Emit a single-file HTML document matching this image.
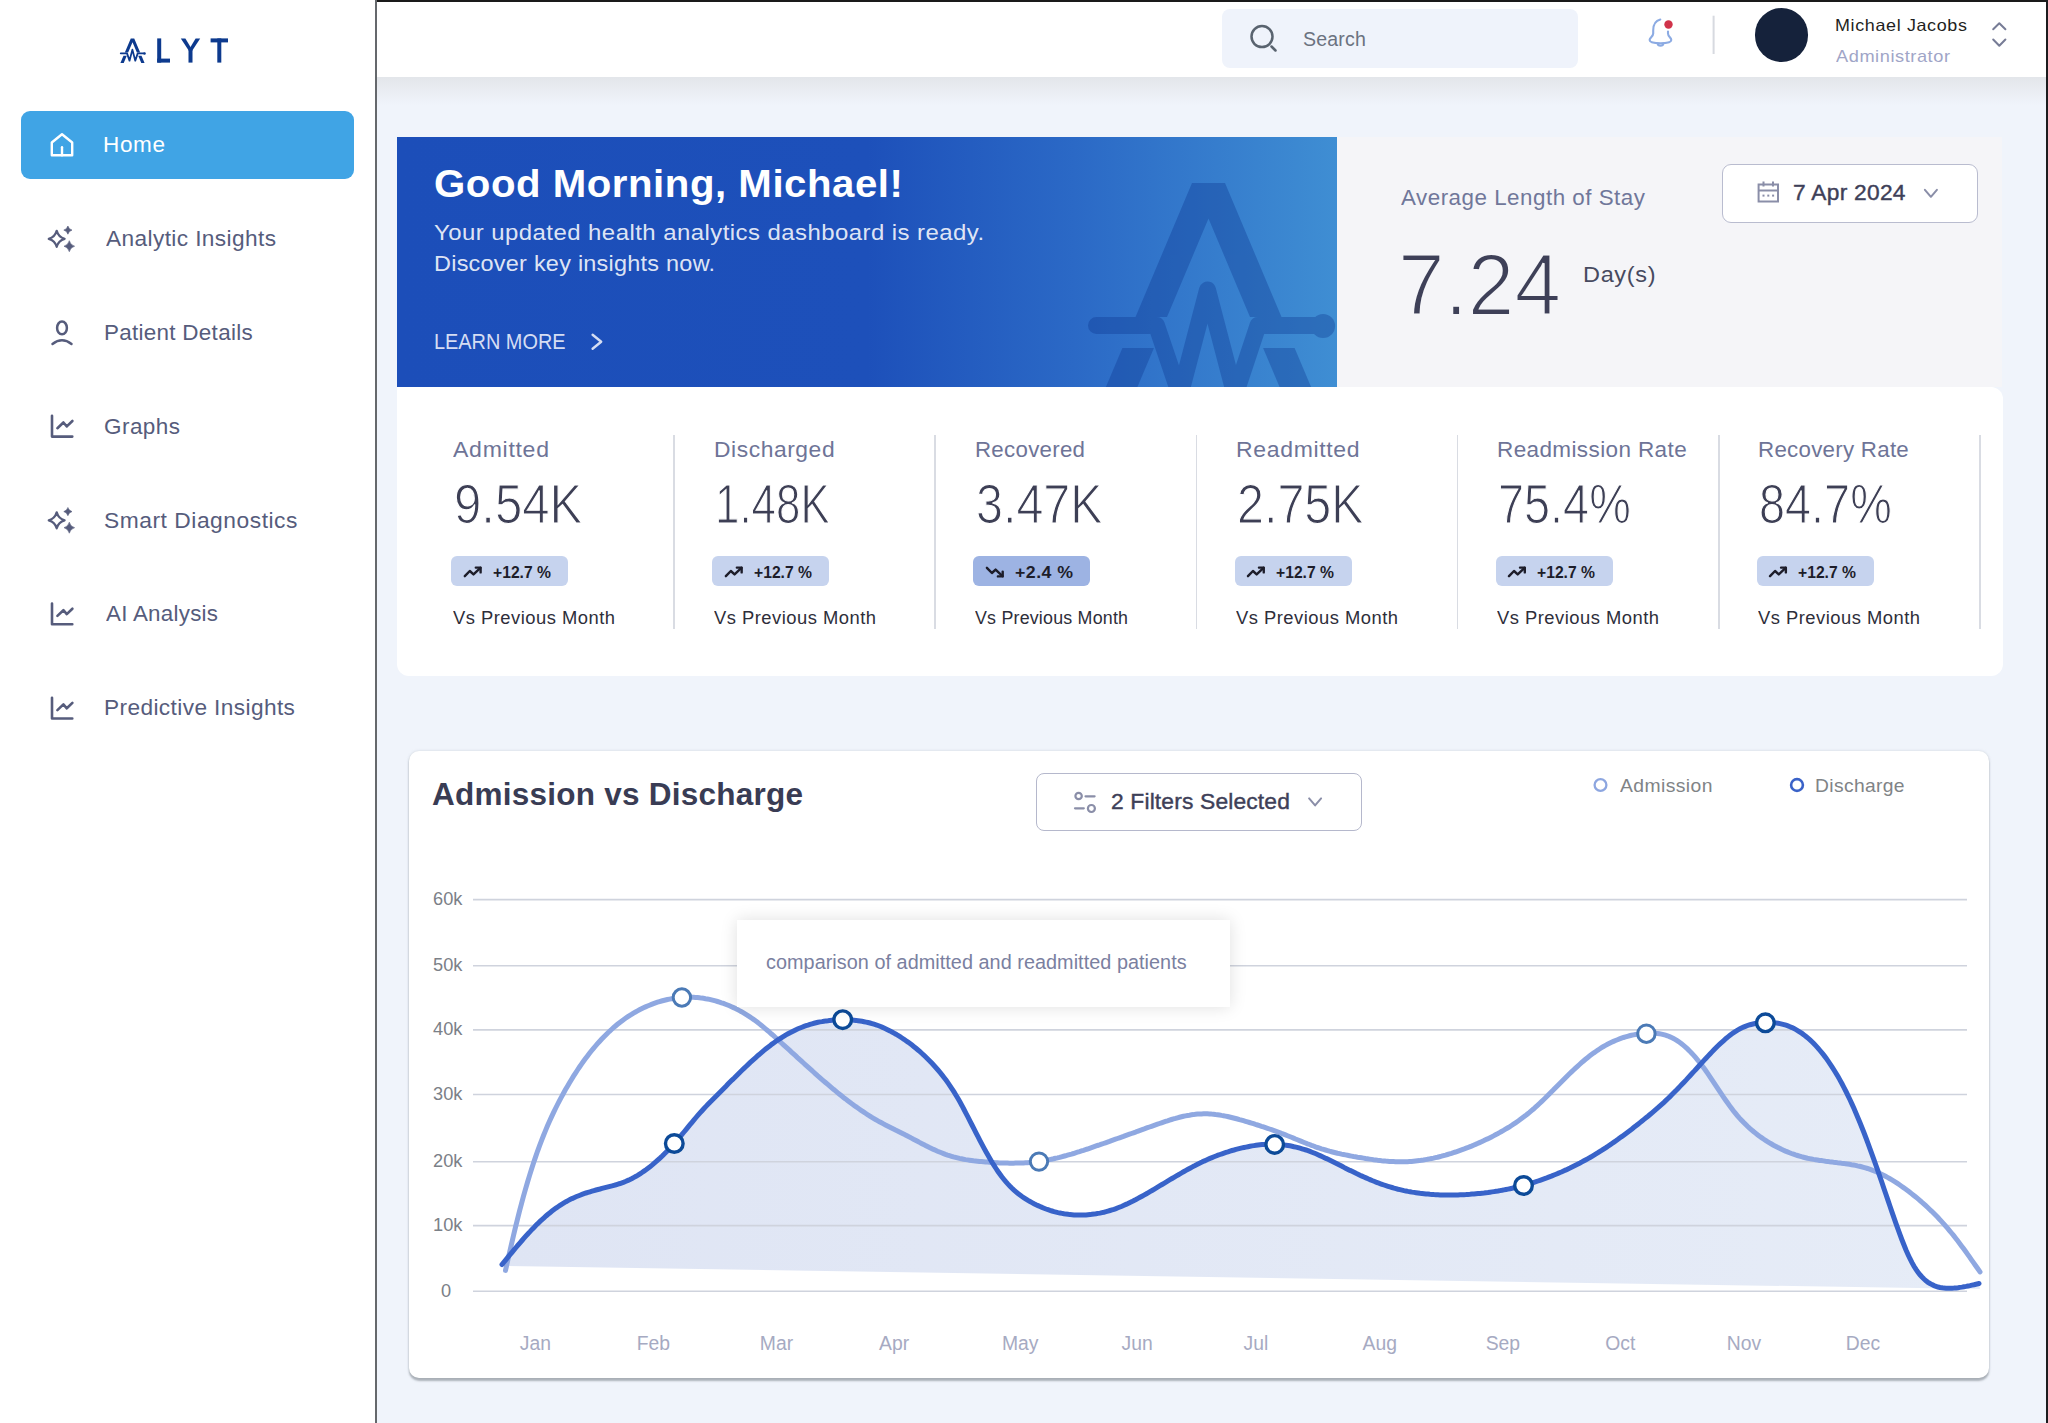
<!DOCTYPE html>
<html><head><meta charset="utf-8"><title>ALYT Dashboard</title>
<style>
html,body{margin:0;padding:0;}
body{width:2048px;height:1423px;overflow:hidden;position:relative;background:#fff;font-family:"Liberation Sans",sans-serif;}
.t{position:absolute;white-space:nowrap;}
</style></head><body>
<div style="position:absolute;left:0px;top:0px;width:376px;height:1423px;background:#fff"></div>
<div style="position:absolute;left:375px;top:0px;width:2px;height:1423px;background:#65686c"></div>
<div style="position:absolute;left:377px;top:0px;width:1669px;height:1423px;background:#f0f4fb"></div>
<div style="position:absolute;left:2046px;top:0px;width:2px;height:1423px;background:#1c1c1e"></div>
<div style="position:absolute;left:377px;top:77px;width:1669px;height:28px;background:linear-gradient(#e3e6ea,rgba(240,244,251,0))"></div>
<div style="position:absolute;left:377px;top:0px;width:1669px;height:77px;background:#fff"></div>
<div style="position:absolute;left:377px;top:0px;width:1669px;height:2px;background:#1a1a1a"></div>
<div style="position:absolute;left:21px;top:111px;width:333px;height:68px;background:#40a4e5;border-radius:9px"></div>
<div class="t" style="left:103.3px;top:133.9px;font-size:21.80px;line-height:21.80px;letter-spacing:0.620px;color:#ffffff;transform:scaleX(1.0331);transform-origin:0 0;">Home</div>
<div class="t" style="left:105.5px;top:228.1px;font-size:21.80px;line-height:21.80px;letter-spacing:0.375px;color:#565c7c;transform:scaleX(1.0396);transform-origin:0 0;">Analytic Insights</div>
<div class="t" style="left:104.2px;top:321.7px;font-size:21.80px;line-height:21.80px;letter-spacing:0.282px;color:#565c7c;transform:scaleX(1.0289);transform-origin:0 0;">Patient Details</div>
<div class="t" style="left:103.7px;top:415.5px;font-size:21.80px;line-height:21.80px;letter-spacing:0.437px;color:#565c7c;transform:scaleX(1.0315);transform-origin:0 0;">Graphs</div>
<div class="t" style="left:104.2px;top:509.6px;font-size:21.80px;line-height:21.80px;letter-spacing:0.496px;color:#565c7c;transform:scaleX(1.0469);transform-origin:0 0;">Smart Diagnostics</div>
<div class="t" style="left:105.5px;top:603.2px;font-size:21.80px;line-height:21.80px;letter-spacing:0.262px;color:#565c7c;transform:scaleX(1.0251);transform-origin:0 0;">AI Analysis</div>
<div class="t" style="left:104.2px;top:697.4px;font-size:21.80px;line-height:21.80px;letter-spacing:0.376px;color:#565c7c;transform:scaleX(1.0398);transform-origin:0 0;">Predictive Insights</div>
<div style="position:absolute;left:1222px;top:9px;width:356px;height:59px;background:#eff3fb;border-radius:8px"></div>
<div class="t" style="left:1303.0px;top:29.7px;font-size:19.33px;line-height:19.33px;letter-spacing:0.153px;color:#6b7280;transform:scaleX(1.0127);transform-origin:0 0;">Search</div>
<div style="position:absolute;left:1754.6px;top:8.4px;width:53.2px;height:53.2px;border-radius:50%;background:#15223b"></div>
<div class="t" style="left:1835.3px;top:17.6px;font-size:16.72px;line-height:16.72px;letter-spacing:0.602px;color:#1f1f22;transform:scaleX(1.0729);transform-origin:0 0;">Michael Jacobs</div>
<div class="t" style="left:1835.5px;top:47.5px;font-size:17.01px;line-height:17.01px;letter-spacing:0.539px;color:#a0a5c7;transform:scaleX(1.0690);transform-origin:0 0;">Administrator</div>
<div style="position:absolute;left:397px;top:136.5px;width:940px;height:250.5px;background:linear-gradient(90deg,#1c4eb9 0%,#1d50ba 50%,#2b69c6 72%,#3f8ed3 100%)"></div>
<div class="t" style="left:433.6px;top:163.5px;font-size:39.24px;line-height:39.24px;letter-spacing:0.514px;color:#ffffff;font-weight:700;transform:scaleX(1.0247);transform-origin:0 0;">Good Morning, Michael!</div>
<div class="t" style="left:433.6px;top:220.6px;font-size:22.97px;line-height:22.97px;letter-spacing:0.431px;color:rgba(255,255,255,0.87);transform:scaleX(1.0426);transform-origin:0 0;">Your updated health analytics dashboard is ready.</div>
<div class="t" style="left:433.6px;top:252.4px;font-size:22.97px;line-height:22.97px;letter-spacing:0.229px;color:rgba(255,255,255,0.87);transform:scaleX(1.0217);transform-origin:0 0;">Discover key insights now.</div>
<div class="t" style="left:434.0px;top:331.4px;font-size:21.80px;line-height:21.80px;letter-spacing:0.000px;color:#d5ddf3;transform:scaleX(0.9128);transform-origin:0 0;">LEARN MORE</div>
<div style="position:absolute;left:1337px;top:137px;width:665px;height:250px;background:#f5f5f8"></div>
<div class="t" style="left:1400.5px;top:187.8px;font-size:21.37px;line-height:21.37px;letter-spacing:0.479px;color:#70779a;transform:scaleX(1.0473);transform-origin:0 0;">Average Length of Stay</div>
<div class="t" style="left:1397.5px;top:240.5px;font-size:87.11px;line-height:87.11px;letter-spacing:0.000px;color:#3e4058;transform:scaleX(0.9616);transform-origin:0 0;-webkit-text-stroke:2.2px #f5f5f8;paint-order:normal;">7.24</div>
<div class="t" style="left:1582.9px;top:263.8px;font-size:22.38px;line-height:22.38px;letter-spacing:0.628px;color:#474a60;transform:scaleX(1.0501);transform-origin:0 0;">Day(s)</div>
<div style="position:absolute;left:1722px;top:163.5px;width:255.5px;height:59.0px;background:#fff;border:1.5px solid #b9bccf;border-radius:9px;box-sizing:border-box"></div>
<div class="t" style="left:1792.7px;top:181.8px;font-size:22.24px;line-height:22.24px;letter-spacing:0.268px;color:#3e4058;transform:scaleX(1.0229);transform-origin:0 0;-webkit-text-stroke:0.4px #3e4058;">7 Apr 2024</div>
<div style="position:absolute;left:397px;top:387px;width:1605.6px;height:289px;background:#fff;border-radius:0 12px 12px 12px"></div>
<div class="t" style="left:452.5px;top:439.0px;font-size:21.80px;line-height:21.80px;letter-spacing:0.673px;color:#6e7497;transform:scaleX(1.0579);transform-origin:0 0;">Admitted</div>
<div class="t" style="left:453.5px;top:476.6px;font-size:54.73px;line-height:54.73px;letter-spacing:0.000px;color:#3d3f55;transform:scaleX(0.8978);transform-origin:0 0;-webkit-text-stroke:1.2px #fff;">9.54K</div>
<div style="position:absolute;left:451.3px;top:556px;width:116.99999999999994px;height:30.299999999999955px;background:#c6d3ee;border-radius:6px"></div>
<div class="t" style="left:492.9px;top:563.5px;font-size:17.01px;line-height:17.01px;letter-spacing:0.000px;color:#1d1d2a;font-weight:700;transform:scaleX(0.9225);transform-origin:0 0;">+12.7 %</div>
<div class="t" style="left:452.5px;top:609.9px;font-size:17.44px;line-height:17.44px;letter-spacing:0.464px;color:#2e2e3a;transform:scaleX(1.0534);transform-origin:0 0;">Vs Previous Month</div>
<div style="position:absolute;left:673.2px;top:435px;width:1.599999999999909px;height:194px;background:#d9dce3"></div>
<div class="t" style="left:713.5px;top:439.0px;font-size:21.80px;line-height:21.80px;letter-spacing:0.548px;color:#6e7497;transform:scaleX(1.0468);transform-origin:0 0;">Discharged</div>
<div class="t" style="left:714.5px;top:476.6px;font-size:54.73px;line-height:54.73px;letter-spacing:0.000px;color:#3d3f55;transform:scaleX(0.8020);transform-origin:0 0;-webkit-text-stroke:1.2px #fff;">1.48K</div>
<div style="position:absolute;left:712.3px;top:556px;width:117.0px;height:30.299999999999955px;background:#c6d3ee;border-radius:6px"></div>
<div class="t" style="left:753.9px;top:563.5px;font-size:17.01px;line-height:17.01px;letter-spacing:0.000px;color:#1d1d2a;font-weight:700;transform:scaleX(0.9225);transform-origin:0 0;">+12.7 %</div>
<div class="t" style="left:713.5px;top:609.9px;font-size:17.44px;line-height:17.44px;letter-spacing:0.464px;color:#2e2e3a;transform:scaleX(1.0534);transform-origin:0 0;">Vs Previous Month</div>
<div style="position:absolute;left:934.4px;top:435px;width:1.6000000000000227px;height:194px;background:#d9dce3"></div>
<div class="t" style="left:974.6px;top:439.0px;font-size:21.80px;line-height:21.80px;letter-spacing:0.280px;color:#6e7497;transform:scaleX(1.0217);transform-origin:0 0;">Recovered</div>
<div class="t" style="left:975.6px;top:476.6px;font-size:54.73px;line-height:54.73px;letter-spacing:0.000px;color:#3d3f55;transform:scaleX(0.8852);transform-origin:0 0;-webkit-text-stroke:1.2px #fff;">3.47K</div>
<div style="position:absolute;left:973.4px;top:556px;width:117.00000000000011px;height:30.299999999999955px;background:#9db3e3;border-radius:6px"></div>
<div class="t" style="left:1015.0px;top:563.5px;font-size:17.01px;line-height:17.01px;letter-spacing:0.439px;color:#1d1d2a;font-weight:700;transform:scaleX(1.0429);transform-origin:0 0;">+2.4 %</div>
<div class="t" style="left:974.6px;top:609.9px;font-size:17.44px;line-height:17.44px;letter-spacing:0.202px;color:#2e2e3a;transform:scaleX(1.0226);transform-origin:0 0;">Vs Previous Month</div>
<div style="position:absolute;left:1195.6px;top:435px;width:1.6000000000001364px;height:194px;background:#d9dce3"></div>
<div class="t" style="left:1235.7px;top:439.0px;font-size:21.80px;line-height:21.80px;letter-spacing:0.638px;color:#6e7497;transform:scaleX(1.0543);transform-origin:0 0;">Readmitted</div>
<div class="t" style="left:1236.7px;top:476.6px;font-size:54.73px;line-height:54.73px;letter-spacing:0.000px;color:#3d3f55;transform:scaleX(0.8852);transform-origin:0 0;-webkit-text-stroke:1.2px #fff;">2.75K</div>
<div style="position:absolute;left:1234.5px;top:556px;width:117.0px;height:30.299999999999955px;background:#c6d3ee;border-radius:6px"></div>
<div class="t" style="left:1276.1px;top:563.5px;font-size:17.01px;line-height:17.01px;letter-spacing:0.000px;color:#1d1d2a;font-weight:700;transform:scaleX(0.9225);transform-origin:0 0;">+12.7 %</div>
<div class="t" style="left:1235.7px;top:609.9px;font-size:17.44px;line-height:17.44px;letter-spacing:0.464px;color:#2e2e3a;transform:scaleX(1.0534);transform-origin:0 0;">Vs Previous Month</div>
<div style="position:absolute;left:1456.8px;top:435px;width:1.6000000000001364px;height:194px;background:#d9dce3"></div>
<div class="t" style="left:1496.7px;top:439.0px;font-size:21.80px;line-height:21.80px;letter-spacing:0.374px;color:#6e7497;transform:scaleX(1.0325);transform-origin:0 0;">Readmission Rate</div>
<div class="t" style="left:1497.7px;top:476.6px;font-size:54.73px;line-height:54.73px;letter-spacing:0.000px;color:#3d3f55;transform:scaleX(0.8558);transform-origin:0 0;-webkit-text-stroke:1.2px #fff;">75.4%</div>
<div style="position:absolute;left:1495.5px;top:556px;width:117.0px;height:30.299999999999955px;background:#c6d3ee;border-radius:6px"></div>
<div class="t" style="left:1537.1px;top:563.5px;font-size:17.01px;line-height:17.01px;letter-spacing:0.000px;color:#1d1d2a;font-weight:700;transform:scaleX(0.9225);transform-origin:0 0;">+12.7 %</div>
<div class="t" style="left:1496.7px;top:609.9px;font-size:17.44px;line-height:17.44px;letter-spacing:0.464px;color:#2e2e3a;transform:scaleX(1.0534);transform-origin:0 0;">Vs Previous Month</div>
<div style="position:absolute;left:1718.0px;top:435px;width:1.599999999999909px;height:194px;background:#d9dce3"></div>
<div class="t" style="left:1757.8px;top:439.0px;font-size:21.80px;line-height:21.80px;letter-spacing:0.269px;color:#6e7497;transform:scaleX(1.0229);transform-origin:0 0;">Recovery Rate</div>
<div class="t" style="left:1758.8px;top:476.6px;font-size:54.73px;line-height:54.73px;letter-spacing:0.000px;color:#3d3f55;transform:scaleX(0.8558);transform-origin:0 0;-webkit-text-stroke:1.2px #fff;">84.7%</div>
<div style="position:absolute;left:1756.5px;top:556px;width:117.0px;height:30.299999999999955px;background:#c6d3ee;border-radius:6px"></div>
<div class="t" style="left:1798.2px;top:563.5px;font-size:17.01px;line-height:17.01px;letter-spacing:0.000px;color:#1d1d2a;font-weight:700;transform:scaleX(0.9225);transform-origin:0 0;">+12.7 %</div>
<div class="t" style="left:1757.8px;top:609.9px;font-size:17.44px;line-height:17.44px;letter-spacing:0.464px;color:#2e2e3a;transform:scaleX(1.0534);transform-origin:0 0;">Vs Previous Month</div>
<div style="position:absolute;left:1979.2px;top:435px;width:1.599999999999909px;height:194px;background:#d9dce3"></div>
<div style="position:absolute;left:409px;top:751px;width:1580px;height:627px;background:#fff;border-radius:10px;box-shadow:0 2.5px 2px rgba(120,128,135,0.55),0 0 3px rgba(150,160,170,0.35)"></div>
<svg style="position:absolute;left:0;top:0" width="2048" height="1423" viewBox="0 0 2048 1423">
<defs><linearGradient id="fg" x1="0" x2="1" y1="0" y2="0"><stop offset="0" stop-color="#dfe5f4"/><stop offset="1" stop-color="#e6ecf7"/></linearGradient></defs>
<path d="M502.0,1264.5 L504.0,1262.0 L506.0,1259.6 L508.0,1257.1 L510.0,1254.7 L512.0,1252.3 L514.0,1249.9 L516.0,1247.5 L518.0,1245.1 L520.0,1242.8 L522.0,1240.5 L524.0,1238.2 L526.0,1235.9 L528.0,1233.7 L530.0,1231.6 L532.0,1229.4 L534.0,1227.4 L536.0,1225.3 L538.0,1223.4 L540.0,1221.4 L542.0,1219.6 L544.0,1217.8 L546.0,1216.0 L548.0,1214.3 L550.0,1212.7 L552.0,1211.1 L554.0,1209.6 L556.0,1208.1 L558.0,1206.7 L560.0,1205.4 L562.0,1204.1 L564.0,1202.9 L566.0,1201.7 L568.0,1200.6 L570.0,1199.6 L572.0,1198.6 L574.0,1197.7 L576.0,1196.8 L578.0,1196.0 L580.0,1195.2 L582.0,1194.4 L584.0,1193.7 L586.0,1193.0 L588.0,1192.4 L590.0,1191.8 L592.0,1191.2 L594.0,1190.6 L596.0,1190.0 L598.0,1189.5 L600.0,1189.0 L602.0,1188.4 L604.0,1187.9 L606.0,1187.4 L608.0,1186.9 L610.0,1186.4 L612.0,1185.9 L614.0,1185.3 L616.0,1184.8 L618.0,1184.1 L620.0,1183.5 L622.0,1182.8 L624.0,1182.1 L626.0,1181.3 L628.0,1180.4 L630.0,1179.5 L632.0,1178.5 L634.0,1177.4 L636.0,1176.3 L638.0,1175.1 L640.0,1173.8 L642.0,1172.5 L644.0,1171.1 L646.0,1169.7 L648.0,1168.2 L650.0,1166.7 L652.0,1165.1 L654.0,1163.4 L656.0,1161.7 L658.0,1159.9 L660.0,1158.1 L662.0,1156.2 L664.0,1154.2 L666.0,1152.3 L668.0,1150.2 L670.0,1148.1 L672.0,1146.0 L674.0,1143.7 L676.0,1141.5 L678.0,1139.2 L680.0,1136.8 L682.0,1134.4 L684.0,1132.0 L686.0,1129.6 L688.0,1127.1 L690.0,1124.7 L692.0,1122.3 L694.0,1119.9 L696.0,1117.5 L698.0,1115.2 L700.0,1112.9 L702.0,1110.7 L704.0,1108.5 L706.0,1106.4 L708.0,1104.3 L710.0,1102.2 L712.0,1100.2 L714.0,1098.2 L716.0,1096.2 L718.0,1094.2 L720.0,1092.2 L722.0,1090.2 L724.0,1088.2 L726.0,1086.2 L728.0,1084.1 L730.0,1082.1 L732.0,1080.1 L734.0,1078.2 L736.0,1076.2 L738.0,1074.2 L740.0,1072.2 L742.0,1070.3 L744.0,1068.4 L746.0,1066.5 L748.0,1064.6 L750.0,1062.7 L752.0,1060.9 L754.0,1059.1 L756.0,1057.3 L758.0,1055.5 L760.0,1053.8 L762.0,1052.1 L764.0,1050.4 L766.0,1048.8 L768.0,1047.2 L770.0,1045.7 L772.0,1044.1 L774.0,1042.7 L776.0,1041.3 L778.0,1039.9 L780.0,1038.6 L782.0,1037.3 L784.0,1036.1 L786.0,1034.9 L788.0,1033.8 L790.0,1032.7 L792.0,1031.7 L794.0,1030.7 L796.0,1029.7 L798.0,1028.8 L800.0,1028.0 L802.0,1027.2 L804.0,1026.4 L806.0,1025.7 L808.0,1025.1 L810.0,1024.4 L812.0,1023.8 L814.0,1023.3 L816.0,1022.8 L818.0,1022.3 L820.0,1021.9 L822.0,1021.6 L824.0,1021.2 L826.0,1020.9 L828.0,1020.7 L830.0,1020.4 L832.0,1020.2 L834.0,1020.1 L836.0,1020.0 L838.0,1019.9 L840.0,1019.8 L842.0,1019.8 L844.0,1019.8 L846.0,1019.8 L848.0,1019.9 L850.0,1020.0 L852.0,1020.1 L854.0,1020.2 L856.0,1020.4 L858.0,1020.7 L860.0,1021.0 L862.0,1021.3 L864.0,1021.7 L866.0,1022.1 L868.0,1022.5 L870.0,1023.0 L872.0,1023.6 L874.0,1024.2 L876.0,1024.8 L878.0,1025.5 L880.0,1026.3 L882.0,1027.1 L884.0,1028.0 L886.0,1028.9 L888.0,1029.9 L890.0,1030.9 L892.0,1032.0 L894.0,1033.1 L896.0,1034.2 L898.0,1035.5 L900.0,1036.7 L902.0,1038.0 L904.0,1039.3 L906.0,1040.7 L908.0,1042.1 L910.0,1043.6 L912.0,1045.1 L914.0,1046.7 L916.0,1048.3 L918.0,1050.0 L920.0,1051.7 L922.0,1053.5 L924.0,1055.3 L926.0,1057.2 L928.0,1059.2 L930.0,1061.2 L932.0,1063.3 L934.0,1065.5 L936.0,1067.7 L938.0,1070.0 L940.0,1072.4 L942.0,1074.9 L944.0,1077.5 L946.0,1080.1 L948.0,1082.9 L950.0,1085.8 L952.0,1088.8 L954.0,1091.9 L956.0,1095.2 L958.0,1098.6 L960.0,1102.1 L962.0,1105.7 L964.0,1109.5 L966.0,1113.3 L968.0,1117.1 L970.0,1121.1 L972.0,1125.0 L974.0,1128.9 L976.0,1132.9 L978.0,1136.7 L980.0,1140.6 L982.0,1144.4 L984.0,1148.1 L986.0,1151.8 L988.0,1155.3 L990.0,1158.8 L992.0,1162.2 L994.0,1165.4 L996.0,1168.5 L998.0,1171.5 L1000.0,1174.3 L1002.0,1177.0 L1004.0,1179.5 L1006.0,1181.9 L1008.0,1184.1 L1010.0,1186.2 L1012.0,1188.2 L1014.0,1190.1 L1016.0,1191.8 L1018.0,1193.5 L1020.0,1195.0 L1022.0,1196.5 L1024.0,1197.8 L1026.0,1199.1 L1028.0,1200.4 L1030.0,1201.5 L1032.0,1202.6 L1034.0,1203.7 L1036.0,1204.7 L1038.0,1205.6 L1040.0,1206.5 L1042.0,1207.4 L1044.0,1208.2 L1046.0,1209.0 L1048.0,1209.7 L1050.0,1210.4 L1052.0,1211.0 L1054.0,1211.6 L1056.0,1212.1 L1058.0,1212.6 L1060.0,1213.0 L1062.0,1213.4 L1064.0,1213.8 L1066.0,1214.1 L1068.0,1214.3 L1070.0,1214.6 L1072.0,1214.7 L1074.0,1214.9 L1076.0,1215.0 L1078.0,1215.0 L1080.0,1215.1 L1082.0,1215.0 L1084.0,1215.0 L1086.0,1214.9 L1088.0,1214.7 L1090.0,1214.6 L1092.0,1214.3 L1094.0,1214.1 L1096.0,1213.8 L1098.0,1213.4 L1100.0,1213.1 L1102.0,1212.6 L1104.0,1212.2 L1106.0,1211.7 L1108.0,1211.1 L1110.0,1210.5 L1112.0,1209.9 L1114.0,1209.3 L1116.0,1208.6 L1118.0,1207.8 L1120.0,1207.0 L1122.0,1206.2 L1124.0,1205.3 L1126.0,1204.4 L1128.0,1203.5 L1130.0,1202.5 L1132.0,1201.6 L1134.0,1200.5 L1136.0,1199.5 L1138.0,1198.4 L1140.0,1197.3 L1142.0,1196.2 L1144.0,1195.1 L1146.0,1194.0 L1148.0,1192.8 L1150.0,1191.6 L1152.0,1190.5 L1154.0,1189.3 L1156.0,1188.1 L1158.0,1186.9 L1160.0,1185.7 L1162.0,1184.5 L1164.0,1183.3 L1166.0,1182.1 L1168.0,1180.9 L1170.0,1179.7 L1172.0,1178.5 L1174.0,1177.3 L1176.0,1176.1 L1178.0,1175.0 L1180.0,1173.8 L1182.0,1172.7 L1184.0,1171.5 L1186.0,1170.4 L1188.0,1169.3 L1190.0,1168.2 L1192.0,1167.1 L1194.0,1166.1 L1196.0,1165.0 L1198.0,1164.0 L1200.0,1163.0 L1202.0,1162.1 L1204.0,1161.1 L1206.0,1160.2 L1208.0,1159.3 L1210.0,1158.4 L1212.0,1157.6 L1214.0,1156.8 L1216.0,1156.0 L1218.0,1155.2 L1220.0,1154.5 L1222.0,1153.8 L1224.0,1153.1 L1226.0,1152.4 L1228.0,1151.8 L1230.0,1151.1 L1232.0,1150.5 L1234.0,1150.0 L1236.0,1149.4 L1238.0,1148.9 L1240.0,1148.4 L1242.0,1147.9 L1244.0,1147.5 L1246.0,1147.1 L1248.0,1146.7 L1250.0,1146.3 L1252.0,1145.9 L1254.0,1145.6 L1256.0,1145.3 L1258.0,1145.0 L1260.0,1144.8 L1262.0,1144.6 L1264.0,1144.4 L1266.0,1144.3 L1268.0,1144.2 L1270.0,1144.2 L1272.0,1144.1 L1274.0,1144.2 L1276.0,1144.2 L1278.0,1144.3 L1280.0,1144.5 L1282.0,1144.7 L1284.0,1144.9 L1286.0,1145.2 L1288.0,1145.5 L1290.0,1145.8 L1292.0,1146.2 L1294.0,1146.7 L1296.0,1147.1 L1298.0,1147.6 L1300.0,1148.2 L1302.0,1148.8 L1304.0,1149.4 L1306.0,1150.0 L1308.0,1150.7 L1310.0,1151.4 L1312.0,1152.2 L1314.0,1153.0 L1316.0,1153.8 L1318.0,1154.7 L1320.0,1155.6 L1322.0,1156.5 L1324.0,1157.4 L1326.0,1158.4 L1328.0,1159.3 L1330.0,1160.3 L1332.0,1161.3 L1334.0,1162.3 L1336.0,1163.3 L1338.0,1164.3 L1340.0,1165.3 L1342.0,1166.3 L1344.0,1167.4 L1346.0,1168.4 L1348.0,1169.4 L1350.0,1170.4 L1352.0,1171.3 L1354.0,1172.3 L1356.0,1173.3 L1358.0,1174.2 L1360.0,1175.2 L1362.0,1176.1 L1364.0,1177.0 L1366.0,1177.9 L1368.0,1178.8 L1370.0,1179.6 L1372.0,1180.5 L1374.0,1181.3 L1376.0,1182.1 L1378.0,1182.8 L1380.0,1183.6 L1382.0,1184.3 L1384.0,1185.0 L1386.0,1185.7 L1388.0,1186.3 L1390.0,1186.9 L1392.0,1187.5 L1394.0,1188.1 L1396.0,1188.6 L1398.0,1189.2 L1400.0,1189.6 L1402.0,1190.1 L1404.0,1190.6 L1406.0,1191.0 L1408.0,1191.4 L1410.0,1191.7 L1412.0,1192.1 L1414.0,1192.4 L1416.0,1192.7 L1418.0,1193.0 L1420.0,1193.3 L1422.0,1193.5 L1424.0,1193.7 L1426.0,1193.9 L1428.0,1194.1 L1430.0,1194.3 L1432.0,1194.4 L1434.0,1194.6 L1436.0,1194.7 L1438.0,1194.8 L1440.0,1194.9 L1442.0,1194.9 L1444.0,1195.0 L1446.0,1195.0 L1448.0,1195.0 L1450.0,1195.0 L1452.0,1195.0 L1454.0,1195.0 L1456.0,1195.0 L1458.0,1194.9 L1460.0,1194.8 L1462.0,1194.8 L1464.0,1194.7 L1466.0,1194.6 L1468.0,1194.4 L1470.0,1194.3 L1472.0,1194.1 L1474.0,1194.0 L1476.0,1193.8 L1478.0,1193.6 L1480.0,1193.4 L1482.0,1193.2 L1484.0,1193.0 L1486.0,1192.7 L1488.0,1192.5 L1490.0,1192.2 L1492.0,1191.9 L1494.0,1191.6 L1496.0,1191.3 L1498.0,1191.0 L1500.0,1190.6 L1502.0,1190.3 L1504.0,1189.9 L1506.0,1189.5 L1508.0,1189.1 L1510.0,1188.7 L1512.0,1188.3 L1514.0,1187.8 L1516.0,1187.4 L1518.0,1186.9 L1520.0,1186.4 L1522.0,1185.8 L1524.0,1185.3 L1526.0,1184.8 L1528.0,1184.2 L1530.0,1183.6 L1532.0,1183.0 L1534.0,1182.3 L1536.0,1181.7 L1538.0,1181.0 L1540.0,1180.3 L1542.0,1179.6 L1544.0,1178.9 L1546.0,1178.2 L1548.0,1177.4 L1550.0,1176.6 L1552.0,1175.9 L1554.0,1175.0 L1556.0,1174.2 L1558.0,1173.4 L1560.0,1172.5 L1562.0,1171.7 L1564.0,1170.8 L1566.0,1169.9 L1568.0,1168.9 L1570.0,1168.0 L1572.0,1167.0 L1574.0,1166.0 L1576.0,1165.0 L1578.0,1164.0 L1580.0,1163.0 L1582.0,1161.9 L1584.0,1160.8 L1586.0,1159.7 L1588.0,1158.6 L1590.0,1157.5 L1592.0,1156.3 L1594.0,1155.1 L1596.0,1153.9 L1598.0,1152.7 L1600.0,1151.4 L1602.0,1150.2 L1604.0,1148.9 L1606.0,1147.6 L1608.0,1146.2 L1610.0,1144.9 L1612.0,1143.5 L1614.0,1142.1 L1616.0,1140.7 L1618.0,1139.3 L1620.0,1137.8 L1622.0,1136.4 L1624.0,1134.9 L1626.0,1133.4 L1628.0,1131.9 L1630.0,1130.4 L1632.0,1128.9 L1634.0,1127.3 L1636.0,1125.8 L1638.0,1124.2 L1640.0,1122.6 L1642.0,1121.0 L1644.0,1119.4 L1646.0,1117.8 L1648.0,1116.2 L1650.0,1114.5 L1652.0,1112.8 L1654.0,1111.1 L1656.0,1109.4 L1658.0,1107.7 L1660.0,1105.9 L1662.0,1104.1 L1664.0,1102.3 L1666.0,1100.4 L1668.0,1098.5 L1670.0,1096.6 L1672.0,1094.6 L1674.0,1092.6 L1676.0,1090.6 L1678.0,1088.5 L1680.0,1086.4 L1682.0,1084.3 L1684.0,1082.2 L1686.0,1080.1 L1688.0,1077.9 L1690.0,1075.7 L1692.0,1073.5 L1694.0,1071.4 L1696.0,1069.2 L1698.0,1067.0 L1700.0,1064.8 L1702.0,1062.6 L1704.0,1060.4 L1706.0,1058.3 L1708.0,1056.1 L1710.0,1054.0 L1712.0,1051.9 L1714.0,1049.8 L1716.0,1047.8 L1718.0,1045.8 L1720.0,1043.9 L1722.0,1042.1 L1724.0,1040.3 L1726.0,1038.5 L1728.0,1036.9 L1730.0,1035.3 L1732.0,1033.8 L1734.0,1032.4 L1736.0,1031.1 L1738.0,1029.9 L1740.0,1028.8 L1742.0,1027.8 L1744.0,1026.9 L1746.0,1026.1 L1748.0,1025.3 L1750.0,1024.7 L1752.0,1024.2 L1754.0,1023.7 L1756.0,1023.3 L1758.0,1023.0 L1760.0,1022.7 L1762.0,1022.5 L1764.0,1022.4 L1766.0,1022.3 L1768.0,1022.3 L1770.0,1022.4 L1772.0,1022.5 L1774.0,1022.7 L1776.0,1022.9 L1778.0,1023.2 L1780.0,1023.6 L1782.0,1024.1 L1784.0,1024.6 L1786.0,1025.2 L1788.0,1025.9 L1790.0,1026.7 L1792.0,1027.6 L1794.0,1028.6 L1796.0,1029.6 L1798.0,1030.8 L1800.0,1032.1 L1802.0,1033.4 L1804.0,1034.9 L1806.0,1036.5 L1808.0,1038.2 L1810.0,1039.9 L1812.0,1041.8 L1814.0,1043.8 L1816.0,1045.9 L1818.0,1048.1 L1820.0,1050.5 L1822.0,1052.9 L1824.0,1055.4 L1826.0,1058.1 L1828.0,1060.9 L1830.0,1063.8 L1832.0,1066.8 L1834.0,1070.0 L1836.0,1073.2 L1838.0,1076.6 L1840.0,1080.1 L1842.0,1083.8 L1844.0,1087.6 L1846.0,1091.5 L1848.0,1095.6 L1850.0,1099.8 L1852.0,1104.1 L1854.0,1108.6 L1856.0,1113.2 L1858.0,1117.9 L1860.0,1122.8 L1862.0,1127.8 L1864.0,1132.8 L1866.0,1138.0 L1868.0,1143.3 L1870.0,1148.8 L1872.0,1154.3 L1874.0,1159.8 L1876.0,1165.5 L1878.0,1171.2 L1880.0,1177.0 L1882.0,1182.8 L1884.0,1188.7 L1886.0,1194.5 L1888.0,1200.4 L1890.0,1206.2 L1892.0,1212.1 L1894.0,1217.9 L1896.0,1223.6 L1898.0,1229.2 L1900.0,1234.7 L1902.0,1240.0 L1904.0,1245.0 L1906.0,1249.9 L1908.0,1254.4 L1910.0,1258.7 L1912.0,1262.6 L1914.0,1266.2 L1916.0,1269.4 L1918.0,1272.2 L1920.0,1274.8 L1922.0,1277.0 L1924.0,1279.0 L1926.0,1280.8 L1928.0,1282.3 L1930.0,1283.5 L1932.0,1284.6 L1934.0,1285.6 L1936.0,1286.3 L1938.0,1287.0 L1940.0,1287.5 L1942.0,1287.8 L1944.0,1288.1 L1946.0,1288.2 L1948.0,1288.3 L1950.0,1288.3 L1952.0,1288.2 L1954.0,1288.1 L1956.0,1287.9 L1958.0,1287.7 L1960.0,1287.4 L1962.0,1287.1 L1964.0,1286.7 L1966.0,1286.4 L1968.0,1286.0 L1970.0,1285.6 L1972.0,1285.1 L1974.0,1284.7 L1976.0,1284.2 L1978.0,1283.8 L1979.0,1283.5 L1980,1289 L505,1266 Z" fill="url(#fg)"/>
<line x1="473" y1="899.6" x2="1967" y2="899.6" stroke="#cfd3dd" stroke-width="1.6"/>
<line x1="473" y1="965.7" x2="1967" y2="965.7" stroke="#cfd3dd" stroke-width="1.6"/>
<line x1="473" y1="1029.9" x2="1967" y2="1029.9" stroke="#cfd3dd" stroke-width="1.6"/>
<line x1="473" y1="1094.5" x2="1967" y2="1094.5" stroke="#cfd3dd" stroke-width="1.6"/>
<line x1="473" y1="1161.8" x2="1967" y2="1161.8" stroke="#cfd3dd" stroke-width="1.6"/>
<line x1="473" y1="1225.6" x2="1967" y2="1225.6" stroke="#cfd3dd" stroke-width="1.6"/>
<line x1="473" y1="1291.2" x2="1967" y2="1291.2" stroke="#cfd3dd" stroke-width="1.6"/>
<path d="M505.5,1270.4 L507.5,1261.5 L509.5,1252.8 L511.5,1244.1 L513.5,1235.5 L515.5,1227.2 L517.5,1219.1 L519.5,1211.2 L521.5,1203.6 L523.5,1196.2 L525.5,1189.1 L527.5,1182.2 L529.5,1175.6 L531.5,1169.2 L533.5,1163.0 L535.5,1157.1 L537.5,1151.3 L539.5,1145.9 L541.5,1140.6 L543.5,1135.5 L545.5,1130.6 L547.5,1125.8 L549.5,1121.3 L551.5,1116.9 L553.5,1112.6 L555.5,1108.5 L557.5,1104.5 L559.5,1100.6 L561.5,1096.9 L563.5,1093.2 L565.5,1089.6 L567.5,1086.2 L569.5,1082.8 L571.5,1079.5 L573.5,1076.2 L575.5,1073.1 L577.5,1070.0 L579.5,1067.0 L581.5,1064.1 L583.5,1061.3 L585.5,1058.6 L587.5,1055.9 L589.5,1053.3 L591.5,1050.8 L593.5,1048.4 L595.5,1046.0 L597.5,1043.7 L599.5,1041.5 L601.5,1039.3 L603.5,1037.2 L605.5,1035.2 L607.5,1033.2 L609.5,1031.3 L611.5,1029.5 L613.5,1027.7 L615.5,1026.0 L617.5,1024.3 L619.5,1022.7 L621.5,1021.2 L623.5,1019.7 L625.5,1018.3 L627.5,1016.9 L629.5,1015.6 L631.5,1014.4 L633.5,1013.1 L635.5,1012.0 L637.5,1010.9 L639.5,1009.8 L641.5,1008.8 L643.5,1007.8 L645.5,1006.9 L647.5,1006.0 L649.5,1005.2 L651.5,1004.4 L653.5,1003.6 L655.5,1002.9 L657.5,1002.2 L659.5,1001.6 L661.5,1001.0 L663.5,1000.5 L665.5,1000.0 L667.5,999.5 L669.5,999.1 L671.5,998.7 L673.5,998.4 L675.5,998.1 L677.5,997.9 L679.5,997.7 L681.5,997.5 L683.5,997.4 L685.5,997.3 L687.5,997.2 L689.5,997.2 L691.5,997.3 L693.5,997.3 L695.5,997.5 L697.5,997.6 L699.5,997.8 L701.5,998.1 L703.5,998.3 L705.5,998.7 L707.5,999.0 L709.5,999.4 L711.5,999.9 L713.5,1000.4 L715.5,1000.9 L717.5,1001.5 L719.5,1002.1 L721.5,1002.8 L723.5,1003.4 L725.5,1004.2 L727.5,1005.0 L729.5,1005.8 L731.5,1006.7 L733.5,1007.6 L735.5,1008.5 L737.5,1009.6 L739.5,1010.6 L741.5,1011.7 L743.5,1012.9 L745.5,1014.1 L747.5,1015.3 L749.5,1016.6 L751.5,1018.0 L753.5,1019.4 L755.5,1020.8 L757.5,1022.3 L759.5,1023.9 L761.5,1025.5 L763.5,1027.1 L765.5,1028.8 L767.5,1030.5 L769.5,1032.2 L771.5,1034.0 L773.5,1035.7 L775.5,1037.5 L777.5,1039.3 L779.5,1041.1 L781.5,1043.0 L783.5,1044.8 L785.5,1046.6 L787.5,1048.4 L789.5,1050.2 L791.5,1052.1 L793.5,1053.9 L795.5,1055.7 L797.5,1057.6 L799.5,1059.4 L801.5,1061.2 L803.5,1063.0 L805.5,1064.8 L807.5,1066.6 L809.5,1068.4 L811.5,1070.2 L813.5,1072.0 L815.5,1073.8 L817.5,1075.6 L819.5,1077.3 L821.5,1079.1 L823.5,1080.8 L825.5,1082.5 L827.5,1084.2 L829.5,1085.9 L831.5,1087.6 L833.5,1089.3 L835.5,1090.9 L837.5,1092.6 L839.5,1094.2 L841.5,1095.8 L843.5,1097.4 L845.5,1098.9 L847.5,1100.5 L849.5,1102.0 L851.5,1103.5 L853.5,1104.9 L855.5,1106.4 L857.5,1107.8 L859.5,1109.2 L861.5,1110.6 L863.5,1111.9 L865.5,1113.3 L867.5,1114.6 L869.5,1115.8 L871.5,1117.1 L873.5,1118.3 L875.5,1119.5 L877.5,1120.6 L879.5,1121.8 L881.5,1122.8 L883.5,1123.9 L885.5,1125.0 L887.5,1126.0 L889.5,1127.0 L891.5,1128.0 L893.5,1129.0 L895.5,1130.0 L897.5,1130.9 L899.5,1131.9 L901.5,1132.9 L903.5,1133.9 L905.5,1135.0 L907.5,1136.0 L909.5,1137.1 L911.5,1138.1 L913.5,1139.2 L915.5,1140.2 L917.5,1141.3 L919.5,1142.4 L921.5,1143.4 L923.5,1144.4 L925.5,1145.5 L927.5,1146.5 L929.5,1147.5 L931.5,1148.4 L933.5,1149.4 L935.5,1150.3 L937.5,1151.2 L939.5,1152.0 L941.5,1152.8 L943.5,1153.6 L945.5,1154.4 L947.5,1155.1 L949.5,1155.7 L951.5,1156.3 L953.5,1156.9 L955.5,1157.4 L957.5,1157.9 L959.5,1158.4 L961.5,1158.8 L963.5,1159.2 L965.5,1159.6 L967.5,1159.9 L969.5,1160.2 L971.5,1160.5 L973.5,1160.8 L975.5,1161.0 L977.5,1161.2 L979.5,1161.5 L981.5,1161.6 L983.5,1161.8 L985.5,1162.0 L987.5,1162.1 L989.5,1162.3 L991.5,1162.4 L993.5,1162.5 L995.5,1162.7 L997.5,1162.8 L999.5,1162.9 L1001.5,1162.9 L1003.5,1163.0 L1005.5,1163.1 L1007.5,1163.1 L1009.5,1163.2 L1011.5,1163.2 L1013.5,1163.2 L1015.5,1163.1 L1017.5,1163.1 L1019.5,1163.1 L1021.5,1163.0 L1023.5,1162.9 L1025.5,1162.8 L1027.5,1162.7 L1029.5,1162.5 L1031.5,1162.3 L1033.5,1162.1 L1035.5,1161.9 L1037.5,1161.7 L1039.5,1161.4 L1041.5,1161.1 L1043.5,1160.8 L1045.5,1160.4 L1047.5,1160.0 L1049.5,1159.6 L1051.5,1159.2 L1053.5,1158.8 L1055.5,1158.3 L1057.5,1157.9 L1059.5,1157.4 L1061.5,1156.8 L1063.5,1156.3 L1065.5,1155.8 L1067.5,1155.2 L1069.5,1154.6 L1071.5,1154.1 L1073.5,1153.5 L1075.5,1152.8 L1077.5,1152.2 L1079.5,1151.6 L1081.5,1150.9 L1083.5,1150.3 L1085.5,1149.6 L1087.5,1149.0 L1089.5,1148.3 L1091.5,1147.6 L1093.5,1146.9 L1095.5,1146.2 L1097.5,1145.5 L1099.5,1144.9 L1101.5,1144.2 L1103.5,1143.5 L1105.5,1142.8 L1107.5,1142.1 L1109.5,1141.4 L1111.5,1140.6 L1113.5,1139.9 L1115.5,1139.2 L1117.5,1138.5 L1119.5,1137.8 L1121.5,1137.1 L1123.5,1136.4 L1125.5,1135.6 L1127.5,1134.9 L1129.5,1134.2 L1131.5,1133.5 L1133.5,1132.8 L1135.5,1132.1 L1137.5,1131.3 L1139.5,1130.6 L1141.5,1129.9 L1143.5,1129.2 L1145.5,1128.4 L1147.5,1127.7 L1149.5,1127.0 L1151.5,1126.3 L1153.5,1125.6 L1155.5,1124.9 L1157.5,1124.2 L1159.5,1123.5 L1161.5,1122.8 L1163.5,1122.1 L1165.5,1121.4 L1167.5,1120.8 L1169.5,1120.1 L1171.5,1119.5 L1173.5,1118.9 L1175.5,1118.4 L1177.5,1117.8 L1179.5,1117.3 L1181.5,1116.8 L1183.5,1116.3 L1185.5,1115.9 L1187.5,1115.5 L1189.5,1115.2 L1191.5,1114.8 L1193.5,1114.6 L1195.5,1114.3 L1197.5,1114.1 L1199.5,1114.0 L1201.5,1113.9 L1203.5,1113.8 L1205.5,1113.8 L1207.5,1113.8 L1209.5,1113.9 L1211.5,1114.1 L1213.5,1114.2 L1215.5,1114.5 L1217.5,1114.7 L1219.5,1115.0 L1221.5,1115.4 L1223.5,1115.7 L1225.5,1116.1 L1227.5,1116.5 L1229.5,1117.0 L1231.5,1117.5 L1233.5,1118.0 L1235.5,1118.5 L1237.5,1119.0 L1239.5,1119.6 L1241.5,1120.1 L1243.5,1120.7 L1245.5,1121.3 L1247.5,1121.9 L1249.5,1122.5 L1251.5,1123.1 L1253.5,1123.7 L1255.5,1124.4 L1257.5,1125.0 L1259.5,1125.6 L1261.5,1126.3 L1263.5,1126.9 L1265.5,1127.6 L1267.5,1128.3 L1269.5,1129.0 L1271.5,1129.7 L1273.5,1130.4 L1275.5,1131.1 L1277.5,1131.8 L1279.5,1132.6 L1281.5,1133.4 L1283.5,1134.1 L1285.5,1134.9 L1287.5,1135.7 L1289.5,1136.5 L1291.5,1137.3 L1293.5,1138.1 L1295.5,1139.0 L1297.5,1139.8 L1299.5,1140.6 L1301.5,1141.4 L1303.5,1142.2 L1305.5,1143.0 L1307.5,1143.8 L1309.5,1144.5 L1311.5,1145.3 L1313.5,1146.0 L1315.5,1146.8 L1317.5,1147.5 L1319.5,1148.1 L1321.5,1148.8 L1323.5,1149.4 L1325.5,1150.0 L1327.5,1150.6 L1329.5,1151.2 L1331.5,1151.7 L1333.5,1152.2 L1335.5,1152.7 L1337.5,1153.2 L1339.5,1153.6 L1341.5,1154.1 L1343.5,1154.5 L1345.5,1154.9 L1347.5,1155.3 L1349.5,1155.7 L1351.5,1156.1 L1353.5,1156.5 L1355.5,1156.8 L1357.5,1157.2 L1359.5,1157.5 L1361.5,1157.8 L1363.5,1158.1 L1365.5,1158.5 L1367.5,1158.8 L1369.5,1159.1 L1371.5,1159.4 L1373.5,1159.7 L1375.5,1159.9 L1377.5,1160.2 L1379.5,1160.4 L1381.5,1160.7 L1383.5,1160.9 L1385.5,1161.1 L1387.5,1161.2 L1389.5,1161.4 L1391.5,1161.5 L1393.5,1161.6 L1395.5,1161.7 L1397.5,1161.8 L1399.5,1161.8 L1401.5,1161.8 L1403.5,1161.8 L1405.5,1161.7 L1407.5,1161.7 L1409.5,1161.5 L1411.5,1161.4 L1413.5,1161.2 L1415.5,1161.0 L1417.5,1160.8 L1419.5,1160.6 L1421.5,1160.3 L1423.5,1160.0 L1425.5,1159.6 L1427.5,1159.3 L1429.5,1158.9 L1431.5,1158.5 L1433.5,1158.1 L1435.5,1157.6 L1437.5,1157.2 L1439.5,1156.7 L1441.5,1156.2 L1443.5,1155.6 L1445.5,1155.1 L1447.5,1154.5 L1449.5,1153.9 L1451.5,1153.3 L1453.5,1152.6 L1455.5,1152.0 L1457.5,1151.3 L1459.5,1150.6 L1461.5,1149.9 L1463.5,1149.2 L1465.5,1148.4 L1467.5,1147.7 L1469.5,1146.9 L1471.5,1146.1 L1473.5,1145.2 L1475.5,1144.4 L1477.5,1143.5 L1479.5,1142.6 L1481.5,1141.7 L1483.5,1140.8 L1485.5,1139.8 L1487.5,1138.9 L1489.5,1137.9 L1491.5,1136.9 L1493.5,1135.9 L1495.5,1134.8 L1497.5,1133.8 L1499.5,1132.7 L1501.5,1131.5 L1503.5,1130.4 L1505.5,1129.2 L1507.5,1128.0 L1509.5,1126.8 L1511.5,1125.5 L1513.5,1124.2 L1515.5,1122.9 L1517.5,1121.5 L1519.5,1120.1 L1521.5,1118.6 L1523.5,1117.1 L1525.5,1115.6 L1527.5,1114.0 L1529.5,1112.4 L1531.5,1110.7 L1533.5,1109.0 L1535.5,1107.2 L1537.5,1105.4 L1539.5,1103.5 L1541.5,1101.6 L1543.5,1099.7 L1545.5,1097.8 L1547.5,1095.8 L1549.5,1093.8 L1551.5,1091.8 L1553.5,1089.8 L1555.5,1087.7 L1557.5,1085.7 L1559.5,1083.7 L1561.5,1081.7 L1563.5,1079.7 L1565.5,1077.7 L1567.5,1075.7 L1569.5,1073.8 L1571.5,1071.9 L1573.5,1070.0 L1575.5,1068.1 L1577.5,1066.3 L1579.5,1064.5 L1581.5,1062.7 L1583.5,1061.0 L1585.5,1059.3 L1587.5,1057.7 L1589.5,1056.1 L1591.5,1054.6 L1593.5,1053.1 L1595.5,1051.7 L1597.5,1050.3 L1599.5,1049.0 L1601.5,1047.7 L1603.5,1046.5 L1605.5,1045.4 L1607.5,1044.3 L1609.5,1043.3 L1611.5,1042.3 L1613.5,1041.4 L1615.5,1040.5 L1617.5,1039.7 L1619.5,1038.9 L1621.5,1038.2 L1623.5,1037.5 L1625.5,1036.9 L1627.5,1036.3 L1629.5,1035.8 L1631.5,1035.3 L1633.5,1034.9 L1635.5,1034.5 L1637.5,1034.2 L1639.5,1033.9 L1641.5,1033.7 L1643.5,1033.5 L1645.5,1033.3 L1647.5,1033.2 L1649.5,1033.1 L1651.5,1033.1 L1653.5,1033.2 L1655.5,1033.3 L1657.5,1033.5 L1659.5,1033.8 L1661.5,1034.1 L1663.5,1034.6 L1665.5,1035.1 L1667.5,1035.8 L1669.5,1036.6 L1671.5,1037.5 L1673.5,1038.5 L1675.5,1039.6 L1677.5,1040.9 L1679.5,1042.3 L1681.5,1043.8 L1683.5,1045.4 L1685.5,1047.1 L1687.5,1048.9 L1689.5,1050.9 L1691.5,1053.0 L1693.5,1055.1 L1695.5,1057.4 L1697.5,1059.8 L1699.5,1062.3 L1701.5,1064.9 L1703.5,1067.6 L1705.5,1070.3 L1707.5,1073.2 L1709.5,1076.1 L1711.5,1079.1 L1713.5,1082.1 L1715.5,1085.1 L1717.5,1088.1 L1719.5,1091.1 L1721.5,1094.1 L1723.5,1097.1 L1725.5,1100.0 L1727.5,1102.8 L1729.5,1105.6 L1731.5,1108.3 L1733.5,1110.9 L1735.5,1113.4 L1737.5,1115.8 L1739.5,1118.1 L1741.5,1120.2 L1743.5,1122.3 L1745.5,1124.3 L1747.5,1126.3 L1749.5,1128.1 L1751.5,1129.8 L1753.5,1131.5 L1755.5,1133.1 L1757.5,1134.7 L1759.5,1136.2 L1761.5,1137.6 L1763.5,1139.0 L1765.5,1140.3 L1767.5,1141.6 L1769.5,1142.8 L1771.5,1144.0 L1773.5,1145.2 L1775.5,1146.2 L1777.5,1147.3 L1779.5,1148.3 L1781.5,1149.3 L1783.5,1150.2 L1785.5,1151.1 L1787.5,1151.9 L1789.5,1152.7 L1791.5,1153.5 L1793.5,1154.2 L1795.5,1154.9 L1797.5,1155.5 L1799.5,1156.1 L1801.5,1156.7 L1803.5,1157.2 L1805.5,1157.7 L1807.5,1158.2 L1809.5,1158.6 L1811.5,1159.0 L1813.5,1159.4 L1815.5,1159.7 L1817.5,1160.0 L1819.5,1160.4 L1821.5,1160.6 L1823.5,1160.9 L1825.5,1161.2 L1827.5,1161.4 L1829.5,1161.7 L1831.5,1161.9 L1833.5,1162.2 L1835.5,1162.4 L1837.5,1162.7 L1839.5,1162.9 L1841.5,1163.2 L1843.5,1163.4 L1845.5,1163.7 L1847.5,1164.0 L1849.5,1164.3 L1851.5,1164.7 L1853.5,1165.0 L1855.5,1165.4 L1857.5,1165.9 L1859.5,1166.3 L1861.5,1166.8 L1863.5,1167.3 L1865.5,1167.9 L1867.5,1168.5 L1869.5,1169.2 L1871.5,1169.9 L1873.5,1170.7 L1875.5,1171.5 L1877.5,1172.3 L1879.5,1173.3 L1881.5,1174.2 L1883.5,1175.2 L1885.5,1176.3 L1887.5,1177.4 L1889.5,1178.5 L1891.5,1179.7 L1893.5,1180.9 L1895.5,1182.1 L1897.5,1183.4 L1899.5,1184.8 L1901.5,1186.2 L1903.5,1187.6 L1905.5,1189.0 L1907.5,1190.5 L1909.5,1192.0 L1911.5,1193.6 L1913.5,1195.2 L1915.5,1196.8 L1917.5,1198.4 L1919.5,1200.1 L1921.5,1201.9 L1923.5,1203.6 L1925.5,1205.4 L1927.5,1207.3 L1929.5,1209.2 L1931.5,1211.1 L1933.5,1213.1 L1935.5,1215.1 L1937.5,1217.1 L1939.5,1219.3 L1941.5,1221.4 L1943.5,1223.6 L1945.5,1225.9 L1947.5,1228.2 L1949.5,1230.6 L1951.5,1233.0 L1953.5,1235.4 L1955.5,1238.0 L1957.5,1240.6 L1959.5,1243.2 L1961.5,1245.9 L1963.5,1248.6 L1965.5,1251.3 L1967.5,1254.1 L1969.5,1256.9 L1971.5,1259.8 L1973.5,1262.6 L1975.5,1265.5 L1977.5,1268.3 L1979.5,1271.2 L1980.0,1271.9" fill="none" stroke="#8fa8e1" stroke-width="5" stroke-linecap="round"/>
<path d="M502.0,1264.5 L504.0,1262.0 L506.0,1259.6 L508.0,1257.1 L510.0,1254.7 L512.0,1252.3 L514.0,1249.9 L516.0,1247.5 L518.0,1245.1 L520.0,1242.8 L522.0,1240.5 L524.0,1238.2 L526.0,1235.9 L528.0,1233.7 L530.0,1231.6 L532.0,1229.4 L534.0,1227.4 L536.0,1225.3 L538.0,1223.4 L540.0,1221.4 L542.0,1219.6 L544.0,1217.8 L546.0,1216.0 L548.0,1214.3 L550.0,1212.7 L552.0,1211.1 L554.0,1209.6 L556.0,1208.1 L558.0,1206.7 L560.0,1205.4 L562.0,1204.1 L564.0,1202.9 L566.0,1201.7 L568.0,1200.6 L570.0,1199.6 L572.0,1198.6 L574.0,1197.7 L576.0,1196.8 L578.0,1196.0 L580.0,1195.2 L582.0,1194.4 L584.0,1193.7 L586.0,1193.0 L588.0,1192.4 L590.0,1191.8 L592.0,1191.2 L594.0,1190.6 L596.0,1190.0 L598.0,1189.5 L600.0,1189.0 L602.0,1188.4 L604.0,1187.9 L606.0,1187.4 L608.0,1186.9 L610.0,1186.4 L612.0,1185.9 L614.0,1185.3 L616.0,1184.8 L618.0,1184.1 L620.0,1183.5 L622.0,1182.8 L624.0,1182.1 L626.0,1181.3 L628.0,1180.4 L630.0,1179.5 L632.0,1178.5 L634.0,1177.4 L636.0,1176.3 L638.0,1175.1 L640.0,1173.8 L642.0,1172.5 L644.0,1171.1 L646.0,1169.7 L648.0,1168.2 L650.0,1166.7 L652.0,1165.1 L654.0,1163.4 L656.0,1161.7 L658.0,1159.9 L660.0,1158.1 L662.0,1156.2 L664.0,1154.2 L666.0,1152.3 L668.0,1150.2 L670.0,1148.1 L672.0,1146.0 L674.0,1143.7 L676.0,1141.5 L678.0,1139.2 L680.0,1136.8 L682.0,1134.4 L684.0,1132.0 L686.0,1129.6 L688.0,1127.1 L690.0,1124.7 L692.0,1122.3 L694.0,1119.9 L696.0,1117.5 L698.0,1115.2 L700.0,1112.9 L702.0,1110.7 L704.0,1108.5 L706.0,1106.4 L708.0,1104.3 L710.0,1102.2 L712.0,1100.2 L714.0,1098.2 L716.0,1096.2 L718.0,1094.2 L720.0,1092.2 L722.0,1090.2 L724.0,1088.2 L726.0,1086.2 L728.0,1084.1 L730.0,1082.1 L732.0,1080.1 L734.0,1078.2 L736.0,1076.2 L738.0,1074.2 L740.0,1072.2 L742.0,1070.3 L744.0,1068.4 L746.0,1066.5 L748.0,1064.6 L750.0,1062.7 L752.0,1060.9 L754.0,1059.1 L756.0,1057.3 L758.0,1055.5 L760.0,1053.8 L762.0,1052.1 L764.0,1050.4 L766.0,1048.8 L768.0,1047.2 L770.0,1045.7 L772.0,1044.1 L774.0,1042.7 L776.0,1041.3 L778.0,1039.9 L780.0,1038.6 L782.0,1037.3 L784.0,1036.1 L786.0,1034.9 L788.0,1033.8 L790.0,1032.7 L792.0,1031.7 L794.0,1030.7 L796.0,1029.7 L798.0,1028.8 L800.0,1028.0 L802.0,1027.2 L804.0,1026.4 L806.0,1025.7 L808.0,1025.1 L810.0,1024.4 L812.0,1023.8 L814.0,1023.3 L816.0,1022.8 L818.0,1022.3 L820.0,1021.9 L822.0,1021.6 L824.0,1021.2 L826.0,1020.9 L828.0,1020.7 L830.0,1020.4 L832.0,1020.2 L834.0,1020.1 L836.0,1020.0 L838.0,1019.9 L840.0,1019.8 L842.0,1019.8 L844.0,1019.8 L846.0,1019.8 L848.0,1019.9 L850.0,1020.0 L852.0,1020.1 L854.0,1020.2 L856.0,1020.4 L858.0,1020.7 L860.0,1021.0 L862.0,1021.3 L864.0,1021.7 L866.0,1022.1 L868.0,1022.5 L870.0,1023.0 L872.0,1023.6 L874.0,1024.2 L876.0,1024.8 L878.0,1025.5 L880.0,1026.3 L882.0,1027.1 L884.0,1028.0 L886.0,1028.9 L888.0,1029.9 L890.0,1030.9 L892.0,1032.0 L894.0,1033.1 L896.0,1034.2 L898.0,1035.5 L900.0,1036.7 L902.0,1038.0 L904.0,1039.3 L906.0,1040.7 L908.0,1042.1 L910.0,1043.6 L912.0,1045.1 L914.0,1046.7 L916.0,1048.3 L918.0,1050.0 L920.0,1051.7 L922.0,1053.5 L924.0,1055.3 L926.0,1057.2 L928.0,1059.2 L930.0,1061.2 L932.0,1063.3 L934.0,1065.5 L936.0,1067.7 L938.0,1070.0 L940.0,1072.4 L942.0,1074.9 L944.0,1077.5 L946.0,1080.1 L948.0,1082.9 L950.0,1085.8 L952.0,1088.8 L954.0,1091.9 L956.0,1095.2 L958.0,1098.6 L960.0,1102.1 L962.0,1105.7 L964.0,1109.5 L966.0,1113.3 L968.0,1117.1 L970.0,1121.1 L972.0,1125.0 L974.0,1128.9 L976.0,1132.9 L978.0,1136.7 L980.0,1140.6 L982.0,1144.4 L984.0,1148.1 L986.0,1151.8 L988.0,1155.3 L990.0,1158.8 L992.0,1162.2 L994.0,1165.4 L996.0,1168.5 L998.0,1171.5 L1000.0,1174.3 L1002.0,1177.0 L1004.0,1179.5 L1006.0,1181.9 L1008.0,1184.1 L1010.0,1186.2 L1012.0,1188.2 L1014.0,1190.1 L1016.0,1191.8 L1018.0,1193.5 L1020.0,1195.0 L1022.0,1196.5 L1024.0,1197.8 L1026.0,1199.1 L1028.0,1200.4 L1030.0,1201.5 L1032.0,1202.6 L1034.0,1203.7 L1036.0,1204.7 L1038.0,1205.6 L1040.0,1206.5 L1042.0,1207.4 L1044.0,1208.2 L1046.0,1209.0 L1048.0,1209.7 L1050.0,1210.4 L1052.0,1211.0 L1054.0,1211.6 L1056.0,1212.1 L1058.0,1212.6 L1060.0,1213.0 L1062.0,1213.4 L1064.0,1213.8 L1066.0,1214.1 L1068.0,1214.3 L1070.0,1214.6 L1072.0,1214.7 L1074.0,1214.9 L1076.0,1215.0 L1078.0,1215.0 L1080.0,1215.1 L1082.0,1215.0 L1084.0,1215.0 L1086.0,1214.9 L1088.0,1214.7 L1090.0,1214.6 L1092.0,1214.3 L1094.0,1214.1 L1096.0,1213.8 L1098.0,1213.4 L1100.0,1213.1 L1102.0,1212.6 L1104.0,1212.2 L1106.0,1211.7 L1108.0,1211.1 L1110.0,1210.5 L1112.0,1209.9 L1114.0,1209.3 L1116.0,1208.6 L1118.0,1207.8 L1120.0,1207.0 L1122.0,1206.2 L1124.0,1205.3 L1126.0,1204.4 L1128.0,1203.5 L1130.0,1202.5 L1132.0,1201.6 L1134.0,1200.5 L1136.0,1199.5 L1138.0,1198.4 L1140.0,1197.3 L1142.0,1196.2 L1144.0,1195.1 L1146.0,1194.0 L1148.0,1192.8 L1150.0,1191.6 L1152.0,1190.5 L1154.0,1189.3 L1156.0,1188.1 L1158.0,1186.9 L1160.0,1185.7 L1162.0,1184.5 L1164.0,1183.3 L1166.0,1182.1 L1168.0,1180.9 L1170.0,1179.7 L1172.0,1178.5 L1174.0,1177.3 L1176.0,1176.1 L1178.0,1175.0 L1180.0,1173.8 L1182.0,1172.7 L1184.0,1171.5 L1186.0,1170.4 L1188.0,1169.3 L1190.0,1168.2 L1192.0,1167.1 L1194.0,1166.1 L1196.0,1165.0 L1198.0,1164.0 L1200.0,1163.0 L1202.0,1162.1 L1204.0,1161.1 L1206.0,1160.2 L1208.0,1159.3 L1210.0,1158.4 L1212.0,1157.6 L1214.0,1156.8 L1216.0,1156.0 L1218.0,1155.2 L1220.0,1154.5 L1222.0,1153.8 L1224.0,1153.1 L1226.0,1152.4 L1228.0,1151.8 L1230.0,1151.1 L1232.0,1150.5 L1234.0,1150.0 L1236.0,1149.4 L1238.0,1148.9 L1240.0,1148.4 L1242.0,1147.9 L1244.0,1147.5 L1246.0,1147.1 L1248.0,1146.7 L1250.0,1146.3 L1252.0,1145.9 L1254.0,1145.6 L1256.0,1145.3 L1258.0,1145.0 L1260.0,1144.8 L1262.0,1144.6 L1264.0,1144.4 L1266.0,1144.3 L1268.0,1144.2 L1270.0,1144.2 L1272.0,1144.1 L1274.0,1144.2 L1276.0,1144.2 L1278.0,1144.3 L1280.0,1144.5 L1282.0,1144.7 L1284.0,1144.9 L1286.0,1145.2 L1288.0,1145.5 L1290.0,1145.8 L1292.0,1146.2 L1294.0,1146.7 L1296.0,1147.1 L1298.0,1147.6 L1300.0,1148.2 L1302.0,1148.8 L1304.0,1149.4 L1306.0,1150.0 L1308.0,1150.7 L1310.0,1151.4 L1312.0,1152.2 L1314.0,1153.0 L1316.0,1153.8 L1318.0,1154.7 L1320.0,1155.6 L1322.0,1156.5 L1324.0,1157.4 L1326.0,1158.4 L1328.0,1159.3 L1330.0,1160.3 L1332.0,1161.3 L1334.0,1162.3 L1336.0,1163.3 L1338.0,1164.3 L1340.0,1165.3 L1342.0,1166.3 L1344.0,1167.4 L1346.0,1168.4 L1348.0,1169.4 L1350.0,1170.4 L1352.0,1171.3 L1354.0,1172.3 L1356.0,1173.3 L1358.0,1174.2 L1360.0,1175.2 L1362.0,1176.1 L1364.0,1177.0 L1366.0,1177.9 L1368.0,1178.8 L1370.0,1179.6 L1372.0,1180.5 L1374.0,1181.3 L1376.0,1182.1 L1378.0,1182.8 L1380.0,1183.6 L1382.0,1184.3 L1384.0,1185.0 L1386.0,1185.7 L1388.0,1186.3 L1390.0,1186.9 L1392.0,1187.5 L1394.0,1188.1 L1396.0,1188.6 L1398.0,1189.2 L1400.0,1189.6 L1402.0,1190.1 L1404.0,1190.6 L1406.0,1191.0 L1408.0,1191.4 L1410.0,1191.7 L1412.0,1192.1 L1414.0,1192.4 L1416.0,1192.7 L1418.0,1193.0 L1420.0,1193.3 L1422.0,1193.5 L1424.0,1193.7 L1426.0,1193.9 L1428.0,1194.1 L1430.0,1194.3 L1432.0,1194.4 L1434.0,1194.6 L1436.0,1194.7 L1438.0,1194.8 L1440.0,1194.9 L1442.0,1194.9 L1444.0,1195.0 L1446.0,1195.0 L1448.0,1195.0 L1450.0,1195.0 L1452.0,1195.0 L1454.0,1195.0 L1456.0,1195.0 L1458.0,1194.9 L1460.0,1194.8 L1462.0,1194.8 L1464.0,1194.7 L1466.0,1194.6 L1468.0,1194.4 L1470.0,1194.3 L1472.0,1194.1 L1474.0,1194.0 L1476.0,1193.8 L1478.0,1193.6 L1480.0,1193.4 L1482.0,1193.2 L1484.0,1193.0 L1486.0,1192.7 L1488.0,1192.5 L1490.0,1192.2 L1492.0,1191.9 L1494.0,1191.6 L1496.0,1191.3 L1498.0,1191.0 L1500.0,1190.6 L1502.0,1190.3 L1504.0,1189.9 L1506.0,1189.5 L1508.0,1189.1 L1510.0,1188.7 L1512.0,1188.3 L1514.0,1187.8 L1516.0,1187.4 L1518.0,1186.9 L1520.0,1186.4 L1522.0,1185.8 L1524.0,1185.3 L1526.0,1184.8 L1528.0,1184.2 L1530.0,1183.6 L1532.0,1183.0 L1534.0,1182.3 L1536.0,1181.7 L1538.0,1181.0 L1540.0,1180.3 L1542.0,1179.6 L1544.0,1178.9 L1546.0,1178.2 L1548.0,1177.4 L1550.0,1176.6 L1552.0,1175.9 L1554.0,1175.0 L1556.0,1174.2 L1558.0,1173.4 L1560.0,1172.5 L1562.0,1171.7 L1564.0,1170.8 L1566.0,1169.9 L1568.0,1168.9 L1570.0,1168.0 L1572.0,1167.0 L1574.0,1166.0 L1576.0,1165.0 L1578.0,1164.0 L1580.0,1163.0 L1582.0,1161.9 L1584.0,1160.8 L1586.0,1159.7 L1588.0,1158.6 L1590.0,1157.5 L1592.0,1156.3 L1594.0,1155.1 L1596.0,1153.9 L1598.0,1152.7 L1600.0,1151.4 L1602.0,1150.2 L1604.0,1148.9 L1606.0,1147.6 L1608.0,1146.2 L1610.0,1144.9 L1612.0,1143.5 L1614.0,1142.1 L1616.0,1140.7 L1618.0,1139.3 L1620.0,1137.8 L1622.0,1136.4 L1624.0,1134.9 L1626.0,1133.4 L1628.0,1131.9 L1630.0,1130.4 L1632.0,1128.9 L1634.0,1127.3 L1636.0,1125.8 L1638.0,1124.2 L1640.0,1122.6 L1642.0,1121.0 L1644.0,1119.4 L1646.0,1117.8 L1648.0,1116.2 L1650.0,1114.5 L1652.0,1112.8 L1654.0,1111.1 L1656.0,1109.4 L1658.0,1107.7 L1660.0,1105.9 L1662.0,1104.1 L1664.0,1102.3 L1666.0,1100.4 L1668.0,1098.5 L1670.0,1096.6 L1672.0,1094.6 L1674.0,1092.6 L1676.0,1090.6 L1678.0,1088.5 L1680.0,1086.4 L1682.0,1084.3 L1684.0,1082.2 L1686.0,1080.1 L1688.0,1077.9 L1690.0,1075.7 L1692.0,1073.5 L1694.0,1071.4 L1696.0,1069.2 L1698.0,1067.0 L1700.0,1064.8 L1702.0,1062.6 L1704.0,1060.4 L1706.0,1058.3 L1708.0,1056.1 L1710.0,1054.0 L1712.0,1051.9 L1714.0,1049.8 L1716.0,1047.8 L1718.0,1045.8 L1720.0,1043.9 L1722.0,1042.1 L1724.0,1040.3 L1726.0,1038.5 L1728.0,1036.9 L1730.0,1035.3 L1732.0,1033.8 L1734.0,1032.4 L1736.0,1031.1 L1738.0,1029.9 L1740.0,1028.8 L1742.0,1027.8 L1744.0,1026.9 L1746.0,1026.1 L1748.0,1025.3 L1750.0,1024.7 L1752.0,1024.2 L1754.0,1023.7 L1756.0,1023.3 L1758.0,1023.0 L1760.0,1022.7 L1762.0,1022.5 L1764.0,1022.4 L1766.0,1022.3 L1768.0,1022.3 L1770.0,1022.4 L1772.0,1022.5 L1774.0,1022.7 L1776.0,1022.9 L1778.0,1023.2 L1780.0,1023.6 L1782.0,1024.1 L1784.0,1024.6 L1786.0,1025.2 L1788.0,1025.9 L1790.0,1026.7 L1792.0,1027.6 L1794.0,1028.6 L1796.0,1029.6 L1798.0,1030.8 L1800.0,1032.1 L1802.0,1033.4 L1804.0,1034.9 L1806.0,1036.5 L1808.0,1038.2 L1810.0,1039.9 L1812.0,1041.8 L1814.0,1043.8 L1816.0,1045.9 L1818.0,1048.1 L1820.0,1050.5 L1822.0,1052.9 L1824.0,1055.4 L1826.0,1058.1 L1828.0,1060.9 L1830.0,1063.8 L1832.0,1066.8 L1834.0,1070.0 L1836.0,1073.2 L1838.0,1076.6 L1840.0,1080.1 L1842.0,1083.8 L1844.0,1087.6 L1846.0,1091.5 L1848.0,1095.6 L1850.0,1099.8 L1852.0,1104.1 L1854.0,1108.6 L1856.0,1113.2 L1858.0,1117.9 L1860.0,1122.8 L1862.0,1127.8 L1864.0,1132.8 L1866.0,1138.0 L1868.0,1143.3 L1870.0,1148.8 L1872.0,1154.3 L1874.0,1159.8 L1876.0,1165.5 L1878.0,1171.2 L1880.0,1177.0 L1882.0,1182.8 L1884.0,1188.7 L1886.0,1194.5 L1888.0,1200.4 L1890.0,1206.2 L1892.0,1212.1 L1894.0,1217.9 L1896.0,1223.6 L1898.0,1229.2 L1900.0,1234.7 L1902.0,1240.0 L1904.0,1245.0 L1906.0,1249.9 L1908.0,1254.4 L1910.0,1258.7 L1912.0,1262.6 L1914.0,1266.2 L1916.0,1269.4 L1918.0,1272.2 L1920.0,1274.8 L1922.0,1277.0 L1924.0,1279.0 L1926.0,1280.8 L1928.0,1282.3 L1930.0,1283.5 L1932.0,1284.6 L1934.0,1285.6 L1936.0,1286.3 L1938.0,1287.0 L1940.0,1287.5 L1942.0,1287.8 L1944.0,1288.1 L1946.0,1288.2 L1948.0,1288.3 L1950.0,1288.3 L1952.0,1288.2 L1954.0,1288.1 L1956.0,1287.9 L1958.0,1287.7 L1960.0,1287.4 L1962.0,1287.1 L1964.0,1286.7 L1966.0,1286.4 L1968.0,1286.0 L1970.0,1285.6 L1972.0,1285.1 L1974.0,1284.7 L1976.0,1284.2 L1978.0,1283.8 L1979.0,1283.5" fill="none" stroke="#3863c9" stroke-width="5" stroke-linecap="round"/>
<circle cx="681.9" cy="997.5" r="8.7" fill="#fff" stroke="#4b7ab6" stroke-width="3"/>
<circle cx="1039" cy="1161.6" r="8.7" fill="#fff" stroke="#4b7ab6" stroke-width="3"/>
<circle cx="1646.4" cy="1033.7" r="8.7" fill="#fff" stroke="#4b7ab6" stroke-width="3"/>
<circle cx="674.3" cy="1143.5" r="8.8" fill="#fff" stroke="#0c4a98" stroke-width="3.4"/>
<circle cx="842.7" cy="1019.7" r="8.8" fill="#fff" stroke="#0c4a98" stroke-width="3.4"/>
<circle cx="1274.7" cy="1144.4" r="8.8" fill="#fff" stroke="#0c4a98" stroke-width="3.4"/>
<circle cx="1523.5" cy="1185.5" r="8.8" fill="#fff" stroke="#0c4a98" stroke-width="3.4"/>
<circle cx="1765.4" cy="1022.8" r="8.8" fill="#fff" stroke="#0c4a98" stroke-width="3.4"/>
</svg>
<div class="t" style="left:431.9px;top:779.2px;font-size:31.10px;line-height:31.10px;letter-spacing:0.229px;color:#393c54;font-weight:700;transform:scaleX(1.0135);transform-origin:0 0;">Admission vs Discharge</div>
<div style="position:absolute;left:1036.3px;top:772.5px;width:325.70000000000005px;height:58.89999999999998px;background:#fff;border:1.5px solid #b5b8cc;border-radius:8px;box-sizing:border-box"></div>
<div class="t" style="left:1111.3px;top:791.1px;font-size:22.53px;line-height:22.53px;letter-spacing:0.144px;color:#3e4058;transform:scaleX(1.0142);transform-origin:0 0;-webkit-text-stroke:0.4px #3e4058;">2 Filters Selected</div>
<div class="t" style="left:1619.5px;top:776.6px;font-size:18.60px;line-height:18.60px;letter-spacing:0.402px;color:#808386;transform:scaleX(1.0389);transform-origin:0 0;">Admission</div>
<div class="t" style="left:1815.4px;top:776.6px;font-size:18.60px;line-height:18.60px;letter-spacing:0.353px;color:#808386;transform:scaleX(1.0349);transform-origin:0 0;">Discharge</div>
<div class="t" style="left:433.1px;top:889.9px;font-size:18.19px;line-height:18.19px;letter-spacing:0.000px;color:#7b8087;">60k</div>
<div class="t" style="left:433.1px;top:956.0px;font-size:18.19px;line-height:18.19px;letter-spacing:0.000px;color:#7b8087;">50k</div>
<div class="t" style="left:433.1px;top:1020.2px;font-size:18.19px;line-height:18.19px;letter-spacing:0.000px;color:#7b8087;">40k</div>
<div class="t" style="left:433.1px;top:1084.8px;font-size:18.19px;line-height:18.19px;letter-spacing:0.000px;color:#7b8087;">30k</div>
<div class="t" style="left:433.1px;top:1152.1px;font-size:18.19px;line-height:18.19px;letter-spacing:0.000px;color:#7b8087;">20k</div>
<div class="t" style="left:433.1px;top:1215.9px;font-size:18.19px;line-height:18.19px;letter-spacing:0.000px;color:#7b8087;">10k</div>
<div class="t" style="left:440.9px;top:1281.5px;font-size:18.19px;line-height:18.19px;letter-spacing:0.000px;color:#7b8087;">0</div>
<div class="t" style="left:519.8px;top:1333.6px;font-size:19.33px;line-height:19.33px;letter-spacing:0.000px;color:#a6aac2;">Jan</div>
<div class="t" style="left:636.8px;top:1333.6px;font-size:19.33px;line-height:19.33px;letter-spacing:0.000px;color:#a6aac2;">Feb</div>
<div class="t" style="left:759.8px;top:1333.6px;font-size:19.33px;line-height:19.33px;letter-spacing:0.000px;color:#a6aac2;">Mar</div>
<div class="t" style="left:879.0px;top:1333.6px;font-size:19.33px;line-height:19.33px;letter-spacing:0.000px;color:#a6aac2;">Apr</div>
<div class="t" style="left:1002.0px;top:1333.6px;font-size:19.33px;line-height:19.33px;letter-spacing:0.000px;color:#a6aac2;">May</div>
<div class="t" style="left:1121.6px;top:1333.6px;font-size:19.33px;line-height:19.33px;letter-spacing:0.000px;color:#a6aac2;">Jun</div>
<div class="t" style="left:1243.5px;top:1333.6px;font-size:19.33px;line-height:19.33px;letter-spacing:0.000px;color:#a6aac2;">Jul</div>
<div class="t" style="left:1362.5px;top:1333.6px;font-size:19.33px;line-height:19.33px;letter-spacing:0.000px;color:#a6aac2;">Aug</div>
<div class="t" style="left:1485.7px;top:1333.6px;font-size:19.33px;line-height:19.33px;letter-spacing:0.000px;color:#a6aac2;">Sep</div>
<div class="t" style="left:1605.3px;top:1333.6px;font-size:19.33px;line-height:19.33px;letter-spacing:0.000px;color:#a6aac2;">Oct</div>
<div class="t" style="left:1726.7px;top:1333.6px;font-size:19.33px;line-height:19.33px;letter-spacing:0.000px;color:#a6aac2;">Nov</div>
<div class="t" style="left:1845.7px;top:1333.6px;font-size:19.33px;line-height:19.33px;letter-spacing:0.000px;color:#a6aac2;">Dec</div>
<div style="position:absolute;left:737px;top:919.6px;width:493px;height:87.4px;background:#fff;box-shadow:0 0 16px rgba(0,0,0,0.13)"></div>
<div class="t" style="left:766.3px;top:952.8px;font-size:19.70px;line-height:19.70px;letter-spacing:0.053px;color:#7a80a0;transform:scaleX(1.0057);transform-origin:0 0;">comparison of admitted and readmitted patients</div>
<svg style="position:absolute;left:0;top:0" width="2048" height="1423" viewBox="0 0 2048 1423">
<clipPath id="bclip"><rect x="397" y="136.5" width="940" height="250.5"/></clipPath>
<g clip-path="url(#bclip)"><g transform="translate(1208.5,183)" opacity="0.33" fill="#0a328c" stroke="#0a328c" stroke-width="0"><polygon points="-16.5,0 16.5,0 73,134 41.5,134 0,35.5 -41.5,134 -73,134"/><circle cx="114.6" cy="142.9" r="12"/><polyline points="-112,142.5 -52,142.5 -28.5,212 -1,107 26.5,212 49.5,142.5 110,142.5" fill="none" stroke-width="17" stroke-linejoin="round" stroke-linecap="round"/><polygon points="-86.1,165 -54.6,165 -83.6,233.6 -115.1,233.6"/><polygon points="86.1,165 54.6,165 83.6,233.6 115.1,233.6"/></g></g>
<g transform="translate(132.5,38.4) scale(0.105)" fill="#0d3a8e" stroke="#0d3a8e" stroke-width="0"><polygon points="-16.5,0 16.5,0 73,134 41.5,134 0,35.5 -41.5,134 -73,134"/><circle cx="114.6" cy="142.9" r="12"/><polyline points="-112,142.5 -52,142.5 -28.5,212 -1,107 26.5,212 49.5,142.5 110,142.5" fill="none" stroke-width="17" stroke-linejoin="round" stroke-linecap="round"/><polygon points="-86.1,165 -54.6,165 -83.6,233.6 -115.1,233.6"/><polygon points="86.1,165 54.6,165 83.6,233.6 115.1,233.6"/></g>
<g fill="#0d3a8e"><rect x="157.2" y="38.4" width="4" height="24.2"/><rect x="157.2" y="58.6" width="12.8" height="4"/><polygon points="180.8,38.4 185.4,38.4 192.3,49.9 190.5,53.2"/><polygon points="200.2,38.4 195.6,38.4 188.7,49.9 190.5,53.2"/><rect x="188.5" y="49.5" width="4" height="13.1"/><rect x="210.6" y="38.4" width="17.4" height="4"/><rect x="217.3" y="38.4" width="4" height="24.2"/></g>
<g fill="none" stroke="#fff" stroke-width="2.4" stroke-linejoin="round" stroke-linecap="round"><path d="M51.8,155.3 V142.5 L62,134.2 L72.2,142.5 V155.3 Z"/><path d="M62,155.3 V147.2"/></g>
<g transform="translate(0,0.0)"><path d="M56.7,230.8 Q58.4,237.1 64.6,238.8 Q58.4,240.5 56.7,246.8 Q55,240.5 48.8,238.8 Q55,237.1 56.7,230.8 Z" fill="none" stroke="#565c7c" stroke-width="2.3" stroke-linejoin="round"/><path d="M67.9,226 Q68.8,229.2 72,230.1 Q68.8,231 67.9,234.2 Q67,231 63.8,230.1 Q67,229.2 67.9,226 Z" fill="#565c7c" stroke="#565c7c" stroke-width="0.6" stroke-linejoin="round"/><path d="M69.3,240.7 Q70.4,245.1 74.6,246.2 Q70.4,247.3 69.3,251.7 Q68.2,247.3 64,246.2 Q68.2,245.1 69.3,240.7 Z" fill="#565c7c" stroke="#565c7c" stroke-width="0.6" stroke-linejoin="round"/></g>
<g transform="translate(0,281.49999999999994)"><path d="M56.7,230.8 Q58.4,237.1 64.6,238.8 Q58.4,240.5 56.7,246.8 Q55,240.5 48.8,238.8 Q55,237.1 56.7,230.8 Z" fill="none" stroke="#565c7c" stroke-width="2.3" stroke-linejoin="round"/><path d="M67.9,226 Q68.8,229.2 72,230.1 Q68.8,231 67.9,234.2 Q67,231 63.8,230.1 Q67,229.2 67.9,226 Z" fill="#565c7c" stroke="#565c7c" stroke-width="0.6" stroke-linejoin="round"/><path d="M69.3,240.7 Q70.4,245.1 74.6,246.2 Q70.4,247.3 69.3,251.7 Q68.2,247.3 64,246.2 Q68.2,245.1 69.3,240.7 Z" fill="#565c7c" stroke="#565c7c" stroke-width="0.6" stroke-linejoin="round"/></g>
<g fill="none" stroke="#565c7c" stroke-width="2.5" stroke-linecap="round"><ellipse cx="62" cy="327.9" rx="4.9" ry="6.4"/><path d="M52.5,344 Q62,336.5 71.5,344"/></g>
<g transform="translate(0,0.0)" fill="none" stroke="#565c7c" stroke-width="2.6" stroke-linecap="round" stroke-linejoin="round"><path d="M52,415.8 V436.6 H72.3"/><path d="M57.4,428.2 L63.4,422.5 L66.8,426.4 L72.4,421"/></g>
<g transform="translate(0,187.70000000000005)" fill="none" stroke="#565c7c" stroke-width="2.6" stroke-linecap="round" stroke-linejoin="round"><path d="M52,415.8 V436.6 H72.3"/><path d="M57.4,428.2 L63.4,422.5 L66.8,426.4 L72.4,421"/></g>
<g transform="translate(0,281.9)" fill="none" stroke="#565c7c" stroke-width="2.6" stroke-linecap="round" stroke-linejoin="round"><path d="M52,415.8 V436.6 H72.3"/><path d="M57.4,428.2 L63.4,422.5 L66.8,426.4 L72.4,421"/></g>
<g fill="none" stroke="#59636f" stroke-width="2.5"><circle cx="1262" cy="36.6" r="10.5"/><path d="M1271.5,46.5 L1275.5,50.5" stroke-linecap="round"/></g>
<g fill="none" stroke="#8cabe3" stroke-width="2.1" stroke-linecap="round" stroke-linejoin="round"><path d="M1660.3,19.6 C1655.5,20.8 1653.2,25 1653.2,30.5 V33.5 C1653.2,36.5 1649.6,37.8 1649.6,40 C1649.6,42.6 1656,43.2 1660.5,43.2 C1665,43.2 1671.3,42.6 1671.3,40 C1671.3,37.8 1668,36.5 1668,33.5 V31.5"/><path d="M1657.6,43.6 C1658,46.3 1663,46.3 1663.4,43.6"/></g>
<circle cx="1668.5" cy="24.5" r="4.2" fill="#d0334a"/>
<rect x="1712.6" y="15.7" width="2" height="38.3" fill="#d7dae0"/>
<g fill="none" stroke="#777c96" stroke-width="2" stroke-linecap="round" stroke-linejoin="round"><path d="M1993.2,29.3 L1999.3,23.2 L2005.4,29.3"/><path d="M1993.2,39.5 L1999.3,45.8 L2005.4,39.5"/></g>
<path d="M592.6,334.8 L601.2,341.8 L592.6,348.8" fill="none" stroke="#d5ddf3" stroke-width="2.4" stroke-linecap="round" stroke-linejoin="round"/>
<g fill="none" stroke="#8a8ea8" stroke-width="2"><rect x="1758.6" y="184.5" width="19.4" height="17" /><path d="M1758.6,190.5 H1778"/><path d="M1763.5,181.4 V186.5 M1773,181.4 V186.5"/></g>
<g fill="#8a8ea8"><rect x="1762.5" y="194.6" width="2" height="2"/><rect x="1767.3" y="194.6" width="2" height="2"/><rect x="1772.1" y="194.6" width="2" height="2"/></g>
<path d="M1924.9,189.8 L1930.9,196.8 L1936.9,189.8" fill="none" stroke="#8a8ea8" stroke-width="2" stroke-linecap="round" stroke-linejoin="round"/>
<g transform="translate(0.0,0)" fill="none" stroke="#1d1d2a" stroke-width="2.4" stroke-linecap="round" stroke-linejoin="round"><path d="M464.8,576.2 L469.8,571 L473.5,574.4 L480.4,567.8"/><path d="M475.8,567.6 H480.6 V572.4"/></g>
<g transform="translate(261.04999999999995,0)" fill="none" stroke="#1d1d2a" stroke-width="2.4" stroke-linecap="round" stroke-linejoin="round"><path d="M464.8,576.2 L469.8,571 L473.5,574.4 L480.4,567.8"/><path d="M475.8,567.6 H480.6 V572.4"/></g>
<g transform="translate(522.1,0)" fill="none" stroke="#1d1d2a" stroke-width="2.4" stroke-linecap="round" stroke-linejoin="round"><path d="M464.8,567.8 L469.8,573 L473.5,569.6 L480.4,576.2"/><path d="M475.8,576.4 H480.6 V571.6"/></g>
<g transform="translate(783.1500000000001,0)" fill="none" stroke="#1d1d2a" stroke-width="2.4" stroke-linecap="round" stroke-linejoin="round"><path d="M464.8,576.2 L469.8,571 L473.5,574.4 L480.4,567.8"/><path d="M475.8,567.6 H480.6 V572.4"/></g>
<g transform="translate(1044.2,0)" fill="none" stroke="#1d1d2a" stroke-width="2.4" stroke-linecap="round" stroke-linejoin="round"><path d="M464.8,576.2 L469.8,571 L473.5,574.4 L480.4,567.8"/><path d="M475.8,567.6 H480.6 V572.4"/></g>
<g transform="translate(1305.25,0)" fill="none" stroke="#1d1d2a" stroke-width="2.4" stroke-linecap="round" stroke-linejoin="round"><path d="M464.8,576.2 L469.8,571 L473.5,574.4 L480.4,567.8"/><path d="M475.8,567.6 H480.6 V572.4"/></g>
<g fill="none" stroke="#8a8ea8" stroke-width="2.2" stroke-linecap="round"><circle cx="1078.6" cy="796" r="3.2"/><path d="M1085.5,796.3 H1094.6"/><path d="M1075,808.3 H1083.8"/><circle cx="1091.4" cy="808.5" r="3.5"/></g>
<path d="M1309.1,798.4 L1315.1,805.4 L1321.1,798.4" fill="none" stroke="#8a8ea8" stroke-width="2" stroke-linecap="round" stroke-linejoin="round"/>
<circle cx="1600.5" cy="785" r="5.9" fill="none" stroke="#8da6e0" stroke-width="2.3"/>
<circle cx="1797" cy="785" r="5.9" fill="none" stroke="#3a62c8" stroke-width="2.6"/>
</svg>
</body></html>
